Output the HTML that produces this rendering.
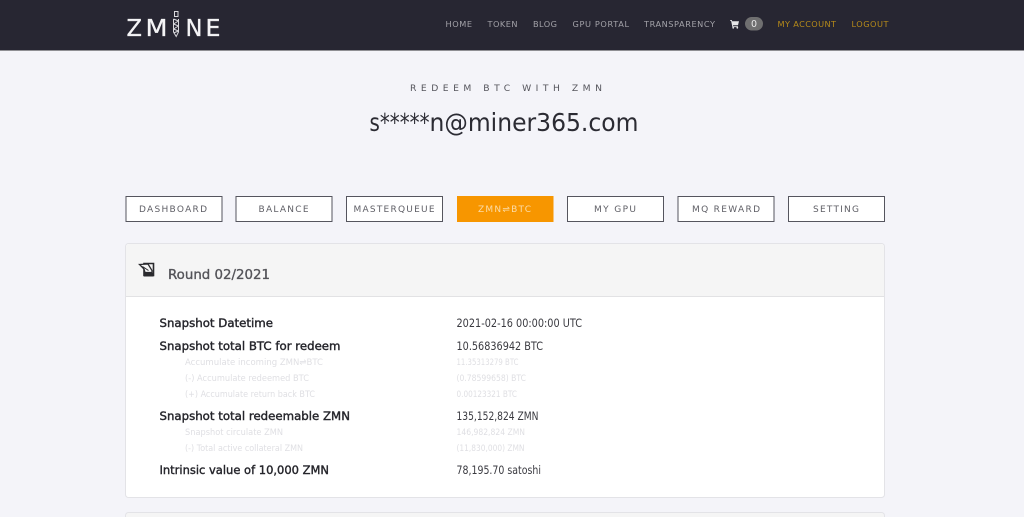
<!DOCTYPE html>
<html lang="en">
<head>
<meta charset="utf-8">
<title>Redeem BTC with ZMN</title>
<style>
html,body{margin:0;padding:0;width:1024px;height:517px;overflow:hidden;background:#f4f4f9}
svg{display:block}
text{font-family:"DejaVu Sans","Liberation Sans",sans-serif;white-space:pre}
.nav{font-size:8.200px;fill:#a3a2a8}
.acc{font-size:8.200px;fill:#b58a1a}
.tab{font-size:9px;fill:#5f5f66}
.lab{font-size:11.600px;fill:#26262c;stroke:#26262c;stroke-width:.4px}
.val{font-size:11.500px;fill:#3a3a40}
.sub{font-size:9.200px;fill:#dfdfe3}
.logo{font-size:23.500px;fill:#f4f4f6;stroke:#f4f4f6;stroke-width:.3px}
</style>
</head>
<body>
<svg width="1024" height="517" viewBox="0 0 1024 517" xmlns="http://www.w3.org/2000/svg">
<rect width="1024" height="517" fill="#f4f4f9"/>
<rect width="1024" height="50" fill="#272632"/>
<rect y="50" width="1024" height="1" fill="#8f8f94"/>

<!-- logo -->
<text class="logo" x="126.500" y="36" textLength="15.500" lengthAdjust="spacingAndGlyphs">Z</text>
<text class="logo" x="145.500" y="36" textLength="22" lengthAdjust="spacingAndGlyphs">M</text>
<text class="logo" x="185.500" y="36" textLength="17" lengthAdjust="spacingAndGlyphs">N</text>
<text class="logo" x="205.500" y="36" textLength="15" lengthAdjust="spacingAndGlyphs">E</text>
<g fill="none" stroke="#d8d8dc" stroke-width="1">
<rect x="174.500" y="11.500" width="3.500" height="5"/>
<path d="M173.500 19l5 2M178.500 21l-5 3M173.500 24l5 2M178.500 26l-5 3M173.500 29l5 2M178.500 31l-5 2M173.500 19v13l2.700 4.500 2.300-4.500v-13"/>
</g>

<!-- nav -->
<text class="nav" x="445.500" y="27" textLength="26.500" lengthAdjust="spacing">HOME</text>
<text class="nav" x="487.500" y="27" textLength="30" lengthAdjust="spacing">TOKEN</text>
<text class="nav" x="533" y="27" textLength="24" lengthAdjust="spacing">BLOG</text>
<text class="nav" x="572.500" y="27" textLength="56.500" lengthAdjust="spacing">GPU PORTAL</text>
<text class="nav" x="644" y="27" textLength="71" lengthAdjust="spacing">TRANSPARENCY</text>
<path d="M730 20h1.800l.4 1.300h6.800l-1 4h-5l.2 1h4.800v.8h-5.600l-1.300-6.300H730z" fill="#e6e6e8"/>
<circle cx="733.200" cy="27.800" r="0.900" fill="#e6e6e8"/>
<circle cx="737.300" cy="27.800" r="0.900" fill="#e6e6e8"/>
<rect x="745" y="17" width="18" height="13.500" rx="6.700" fill="#6f6f70"/>
<text x="754" y="27" font-size="9.500" fill="#e8e8e8" text-anchor="middle">0</text>
<text class="acc" x="777.500" y="27" textLength="58.500" lengthAdjust="spacing">MY ACCOUNT</text>
<text class="acc" x="851.500" y="27" textLength="37" lengthAdjust="spacing">LOGOUT</text>

<!-- heading -->
<text x="410" y="91" font-size="9.200" fill="#55555c" textLength="192" lengthAdjust="spacing">REDEEM BTC WITH ZMN</text>
<text x="369.500" y="131" font-size="25" fill="#2b2b33" textLength="60" lengthAdjust="spacingAndGlyphs">s*****</text>
<text x="429.500" y="131" font-size="25" fill="#2b2b33" textLength="209" lengthAdjust="spacingAndGlyphs">n@miner365.com</text>

<!-- tabs -->
<g fill="#fff" stroke="#55555e" stroke-width="1">
<rect x="126" y="196.500" width="96" height="25"/>
<rect x="236" y="196.500" width="96" height="25"/>
<rect x="346.500" y="196.500" width="96" height="25"/>
<rect x="567.500" y="196.500" width="96" height="25"/>
<rect x="678" y="196.500" width="96" height="25"/>
<rect x="788.500" y="196.500" width="96" height="25"/>
</g>
<rect x="457" y="196" width="96.500" height="26" fill="#f79600"/>
<text class="tab" x="139" y="212" textLength="68" lengthAdjust="spacing">DASHBOARD</text>
<text class="tab" x="258.500" y="212" textLength="50" lengthAdjust="spacing">BALANCE</text>
<text class="tab" x="353.500" y="212" textLength="81" lengthAdjust="spacing">MASTERQUEUE</text>
<text class="tab" x="478" y="212" textLength="53" lengthAdjust="spacing" style="fill:#fbdca8">ZMN⇌BTC</text>
<text class="tab" x="594" y="212" textLength="42" lengthAdjust="spacing">MY GPU</text>
<text class="tab" x="692" y="212" textLength="68" lengthAdjust="spacing">MQ REWARD</text>
<text class="tab" x="813" y="212" textLength="46" lengthAdjust="spacing">SETTING</text>

<!-- card -->
<rect x="125.500" y="243.500" width="759" height="254" rx="3" fill="#fff" stroke="#e3e3e7"/>
<path d="M126 247a3 3 0 0 1 3-3h752a3 3 0 0 1 3 3v49H126z" fill="#f5f5f5"/>
<rect x="126" y="296" width="758" height="1" fill="#e2e2e4"/>

<!-- round icon -->
<path d="M144 263.500h9.500v12H144z" fill="none" stroke="#2a2a2e" stroke-width="1.600"/>
<path d="M139.500 264.500l8.500-.5 4 6.500v2h-7l-1-3.500z" fill="#f5f5f5" stroke="#2a2a2e" stroke-width="1.300"/>
<path d="M142.500 266.500l6 4M144.500 273.500h8.500v2.500h-8.500z" fill="#2a2a2e" stroke="#2a2a2e" stroke-width="1"/>
<text x="168" y="279" font-size="13.500" fill="#55555a" stroke="#55555a" stroke-width=".35" textLength="102" lengthAdjust="spacingAndGlyphs">Round 02/2021</text>

<!-- rows -->
<text class="lab" x="159.500" y="327" textLength="113.500" lengthAdjust="spacingAndGlyphs">Snapshot Datetime</text>
<text class="val" x="456.500" y="327" textLength="125.500" lengthAdjust="spacingAndGlyphs">2021-02-16 00:00:00 UTC</text>

<text class="lab" x="159.500" y="350" textLength="181" lengthAdjust="spacingAndGlyphs">Snapshot total BTC for redeem</text>
<text class="val" x="456.500" y="350" textLength="86.500" lengthAdjust="spacingAndGlyphs">10.56836942 BTC</text>

<text class="sub" x="185" y="365" textLength="138" lengthAdjust="spacingAndGlyphs">Accumulate incoming ZMN⇌BTC</text>
<text class="sub" x="456.500" y="365" textLength="62" lengthAdjust="spacingAndGlyphs">11.35313279 BTC</text>

<text class="sub" x="185" y="381" textLength="124" lengthAdjust="spacingAndGlyphs">(-) Accumulate redeemed BTC</text>
<text class="sub" x="456.500" y="381" textLength="69.500" lengthAdjust="spacingAndGlyphs">(0.78599658) BTC</text>

<text class="sub" x="185" y="397" textLength="130" lengthAdjust="spacingAndGlyphs">(+) Accumulate return back BTC</text>
<text class="sub" x="456.500" y="397" textLength="60.500" lengthAdjust="spacingAndGlyphs">0.00123321 BTC</text>

<text class="lab" x="159.500" y="420" textLength="190.500" lengthAdjust="spacingAndGlyphs">Snapshot total redeemable ZMN</text>
<text class="val" x="456.500" y="420" textLength="82" lengthAdjust="spacingAndGlyphs">135,152,824 ZMN</text>

<text class="sub" x="185" y="435" textLength="98" lengthAdjust="spacingAndGlyphs">Snapshot circulate ZMN</text>
<text class="sub" x="456.500" y="435" textLength="68.500" lengthAdjust="spacingAndGlyphs">146,982,824 ZMN</text>

<text class="sub" x="185" y="451" textLength="118" lengthAdjust="spacingAndGlyphs">(-) Total active collateral ZMN</text>
<text class="sub" x="456.500" y="451" textLength="68" lengthAdjust="spacingAndGlyphs">(11,830,000) ZMN</text>

<text class="lab" x="159.500" y="474" textLength="169.500" lengthAdjust="spacingAndGlyphs">Intrinsic value of 10,000 ZMN</text>
<text class="val" x="456.500" y="474" textLength="84.500" lengthAdjust="spacingAndGlyphs">78,195.70 satoshi</text>

<!-- next card -->
<rect x="125.500" y="512.500" width="759" height="20" rx="3" fill="#f5f5f5" stroke="#e3e3e7"/>
</svg>
</body>
</html>
